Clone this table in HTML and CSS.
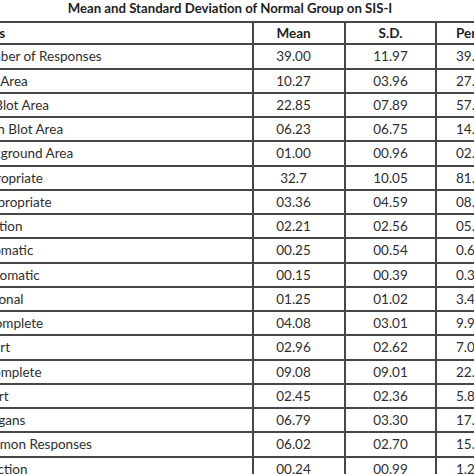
FILE: index.html
```html
<!DOCTYPE html>
<html lang="en">
<head>
<meta charset="utf-8">
<title>Mean and Standard Deviation of Normal Group on SIS-I</title>
<link rel="stylesheet" href="styles.css">
</head>
<body>
<div class="page">
  <h1 class="title">Mean and Standard Deviation of Normal Group on SIS-I</h1>
  <table class="stats">
    <colgroup>
      <col class="c-label"><col class="c-mean"><col class="c-sd"><col class="c-pct">
    </colgroup>
    <thead>
      <tr><th class="label">Items</th><th class="mean">Mean</th><th class="sd">S.D.</th><th class="pct">Percentage</th></tr>
    </thead>
    <tbody>
      <tr><td class="label">Number of Responses</td><td class="mean">39.00</td><td class="sd">11.97</td><td class="pct">39.00</td></tr>
      <tr><td class="label">Side Area</td><td class="mean">10.27</td><td class="sd">03.96</td><td class="pct">27.05</td></tr>
      <tr><td class="label">Big Blot Area</td><td class="mean">22.85</td><td class="sd">07.89</td><td class="pct">57.63</td></tr>
      <tr><td class="label">Open Blot Area</td><td class="mean">06.23</td><td class="sd">06.75</td><td class="pct">14.28</td></tr>
      <tr><td class="label">Background Area</td><td class="mean">01.00</td><td class="sd">00.96</td><td class="pct">02.56</td></tr>
      <tr><td class="label">Appropriate</td><td class="mean">32.7</td><td class="sd">10.05</td><td class="pct">81.40</td></tr>
      <tr><td class="label">Inappropriate</td><td class="mean">03.36</td><td class="sd">04.59</td><td class="pct">08.61</td></tr>
      <tr><td class="label">Rotation</td><td class="mean">02.21</td><td class="sd">02.56</td><td class="pct">05.66</td></tr>
      <tr><td class="label">Chromatic</td><td class="mean">00.25</td><td class="sd">00.54</td><td class="pct">0.64</td></tr>
      <tr><td class="label">Achromatic</td><td class="mean">00.15</td><td class="sd">00.39</td><td class="pct">0.38</td></tr>
      <tr><td class="label">Optional</td><td class="mean">01.25</td><td class="sd">01.02</td><td class="pct">3.45</td></tr>
      <tr><td class="label">H Complete</td><td class="mean">04.08</td><td class="sd">03.01</td><td class="pct">9.96</td></tr>
      <tr><td class="label">H Part</td><td class="mean">02.96</td><td class="sd">02.62</td><td class="pct">7.06</td></tr>
      <tr><td class="label">A Complete</td><td class="mean">09.08</td><td class="sd">09.01</td><td class="pct">22.30</td></tr>
      <tr><td class="label">A Part</td><td class="mean">02.45</td><td class="sd">02.36</td><td class="pct">5.84</td></tr>
      <tr><td class="label">S Organs</td><td class="mean">06.79</td><td class="sd">03.30</td><td class="pct">17.41</td></tr>
      <tr><td class="label">Common Responses</td><td class="mean">06.02</td><td class="sd">02.70</td><td class="pct">15.43</td></tr>
      <tr><td class="label">Rejection</td><td class="mean">00.24</td><td class="sd">00.99</td><td class="pct">1.25</td></tr>
    </tbody>
  </table>
</div>
</body>
</html>
```
FILE: styles.css
```css
html, body {
  margin: 0;
  padding: 0;
  background: #ffffff;
}
body {
  width: 474px;
  height: 474px;
  overflow: hidden;
  font-family: Lato, "Open Sans", sans-serif;
  color: #2e2e2e;
}
.page {
  margin-left: -40px;
  width: 567px;
}
.title {
  margin: 0;
  height: 21px;
  padding-right: 27px;
  font-size: 13.2px;
  line-height: 17px;
  font-weight: 700;
  text-align: center;
  color: #1e1e1e;
}
.stats {
  border-collapse: collapse;
  table-layout: fixed;
  width: 567px;
  font-size: 13.5px;
}
.c-label { width: 292px; }
.c-mean { width: 92px; }
.c-sd { width: 91px; }
.c-pct { width: 92px; }
.stats th, .stats td {
  border: 2px solid #474747;
  height: 22.25px;
  padding: 0;
  vertical-align: middle;
  white-space: nowrap;
  overflow: hidden;
  line-height: 16px;
}
.stats thead th {
  height: 20.3px;
  font-weight: 700;
  color: #1e1e1e;
}
.stats .label {
  text-align: left;
  padding-left: 10px;
}
.stats .mean {
  text-align: center;
  padding-right: 11px;
}
.stats .sd {
  text-align: center;
}
.stats .pct {
  text-align: left;
  padding-left: 19px;
}
```
